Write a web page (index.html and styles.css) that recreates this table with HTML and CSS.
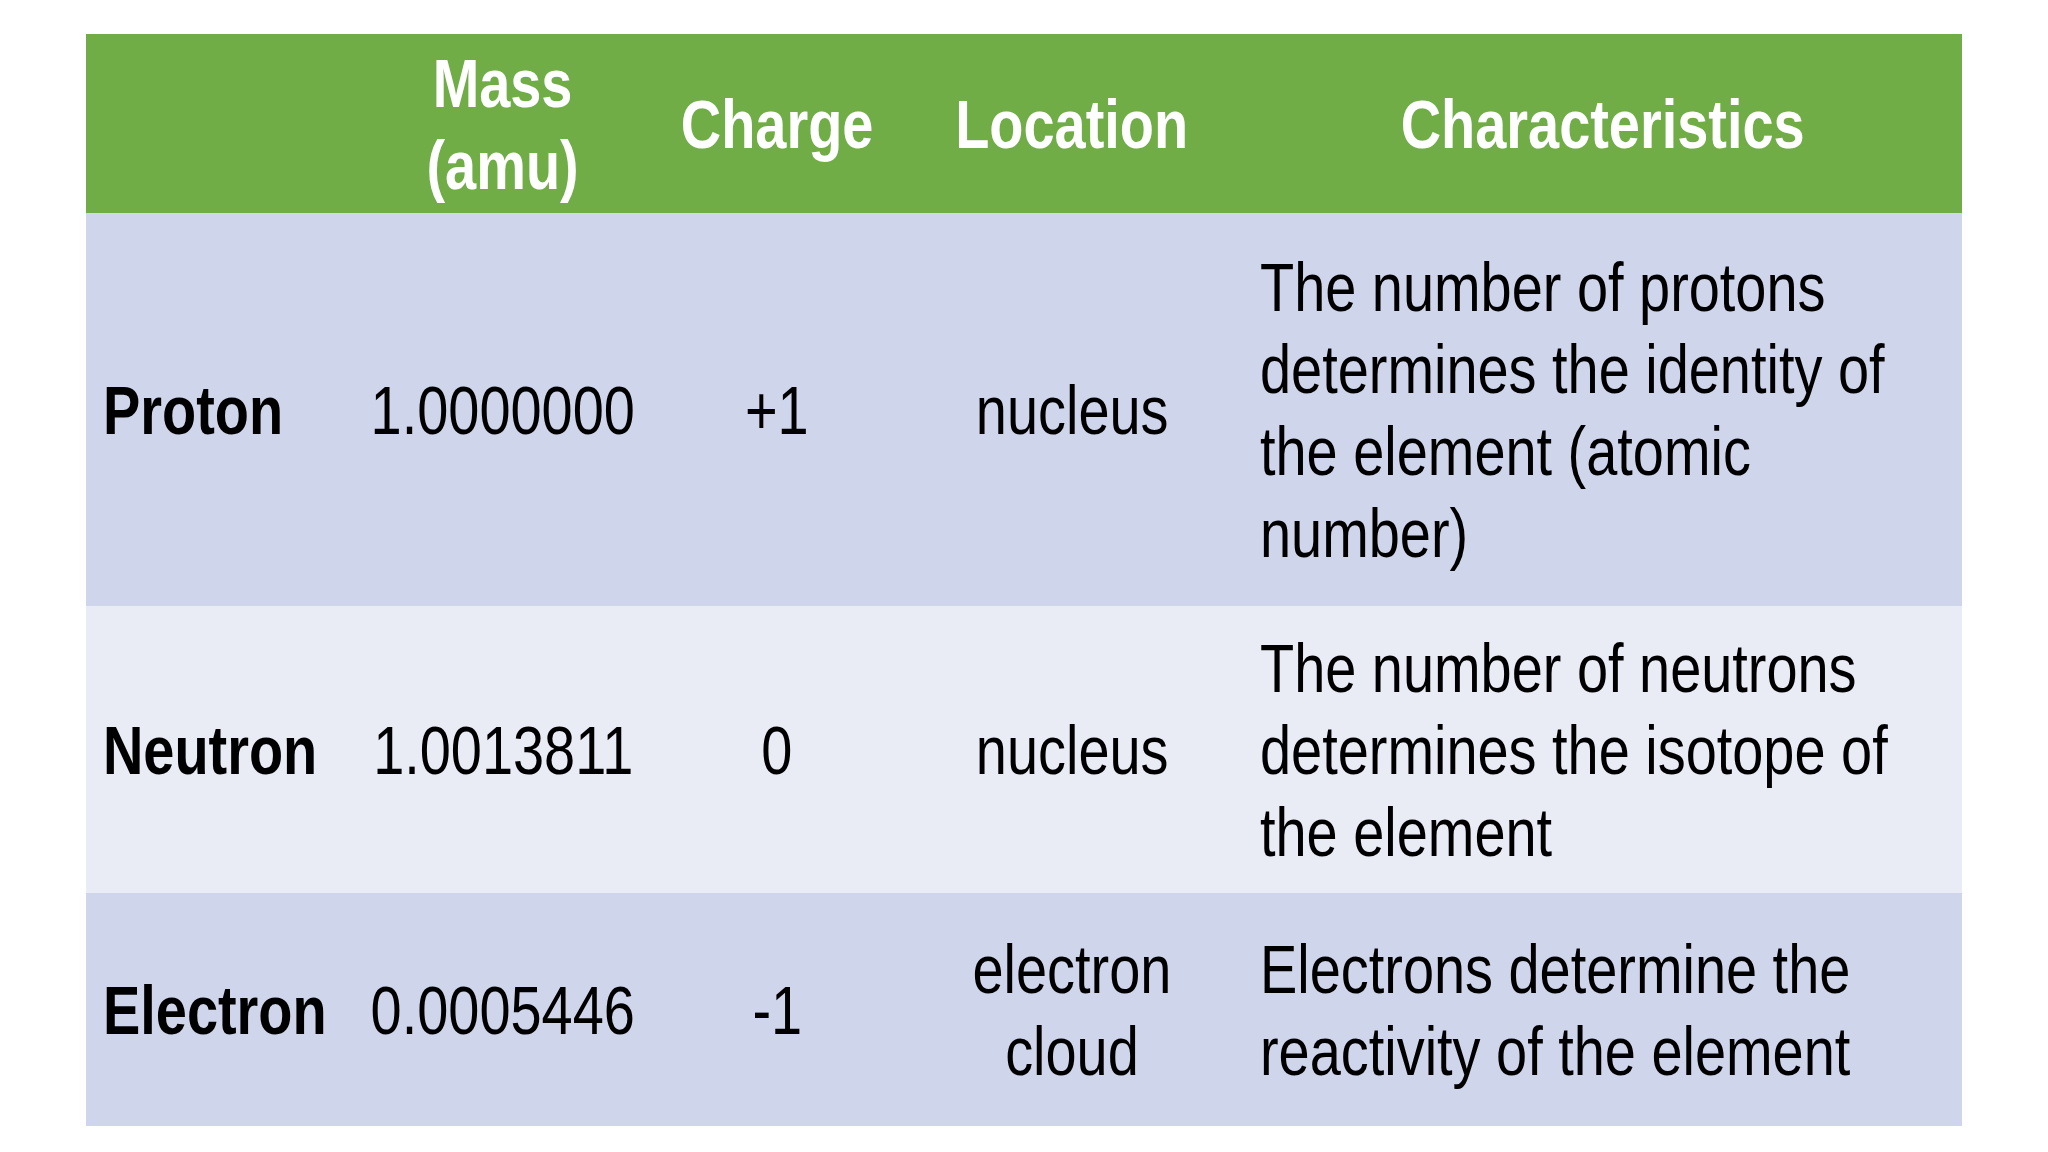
FILE: index.html
```html
<!DOCTYPE html>
<html lang="en">
<head>
<meta charset="utf-8">
<title>Subatomic particles</title>
<link rel="stylesheet" href="styles.css">
</head>
<body>
<table class="particles">
  <colgroup>
    <col class="c-name">
    <col class="c-mass">
    <col class="c-charge">
    <col class="c-loc">
    <col class="c-char">
  </colgroup>
  <thead>
    <tr class="head">
      <th></th>
      <th><div class="mid"><span class="t">Mass<br>(amu)</span></div></th>
      <th><div class="mid"><span class="t">Charge</span></div></th>
      <th><div class="mid"><span class="t">Location</span></div></th>
      <th><div class="mid"><span class="t">Characteristics</span></div></th>
    </tr>
  </thead>
  <tbody>
    <tr class="band r1">
      <td class="name"><span class="t">Proton</span></td>
      <td class="num"><div class="mid"><span class="t">1.0000000</span></div></td>
      <td class="num"><div class="mid"><span class="t">+1</span></div></td>
      <td class="num"><div class="mid"><span class="t">nucleus</span></div></td>
      <td class="desc"><span class="t">The number of protons<br>determines the identity of<br>the element (atomic<br>number)</span></td>
    </tr>
    <tr class="light r2">
      <td class="name"><span class="t">Neutron</span></td>
      <td class="num"><div class="mid"><span class="t">1.0013811</span></div></td>
      <td class="num"><div class="mid"><span class="t">0</span></div></td>
      <td class="num"><div class="mid"><span class="t">nucleus</span></div></td>
      <td class="desc"><span class="t">The number of neutrons<br>determines the isotope of<br>the element</span></td>
    </tr>
    <tr class="band r3">
      <td class="name"><span class="t">Electron</span></td>
      <td class="num"><div class="mid"><span class="t">0.0005446</span></div></td>
      <td class="num"><div class="mid"><span class="t">-1</span></div></td>
      <td class="num"><div class="mid"><span class="t">electron<br>cloud</span></div></td>
      <td class="desc"><span class="t">Electrons determine the<br>reactivity of the element</span></td>
    </tr>
  </tbody>
</table>
</body>
</html>
```
FILE: styles.css
```css
html, body {
  margin: 0;
  padding: 0;
  background: #ffffff;
}
body {
  padding: 34px 0 0 86px;
}
.particles {
  border-collapse: collapse;
  table-layout: fixed;
  width: 1876px;
  font-family: "Liberation Sans", Arial, sans-serif;
  font-size: 68px;
  line-height: 82px;
  color: #000000;
}
.c-name { width: 267px; }
.c-mass { width: 300px; }
.c-charge { width: 248px; }
.c-loc { width: 342px; }
.c-char { width: 719px; }

.particles th,
.particles td {
  padding: 0 17px;
  vertical-align: middle;
  white-space: nowrap;
}
.particles th,
.particles td.num {
  padding: 0;
}
/* centred content that may be wider before the horizontal scale */
.mid {
  display: flex;
  justify-content: center;
  text-align: center;
}
/* Narrow face: scale the Arial-metric face horizontally */
.t {
  display: inline-block;
  flex: none;
  transform: scaleX(0.822);
  transform-origin: center center;
}
.head {
  height: 179px;
  background: #70ad47;
}
.head th {
  color: #ffffff;
  font-weight: bold;
  text-align: center;
}
.band { background: #cfd5ea; }
.light { background: #e9ebf5; }
.r1 { height: 393px; }
.r2 { height: 287px; }
.r3 { height: 233px; }

.name {
  font-weight: bold;
  text-align: left;
}
.name .t,
.desc .t {
  transform-origin: left center;
}
.desc { text-align: left; }
```
